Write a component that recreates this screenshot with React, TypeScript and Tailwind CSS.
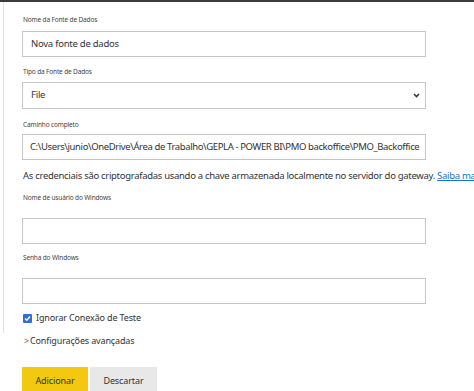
import React from "react";

const font = { fontFamily: '"Noto Sans", "Open Sans", sans-serif' };

function Label({ children, className = "" }: { children: React.ReactNode; className?: string }) {
  return (
    <div className={`h-[12px] leading-[12px] text-[6.5px] tracking-[-0.15px] text-[#444] pl-[19px] ${className}`}>{children}</div>
  );
}

export default function App() {
  return (
    <div className="w-[474px] h-[391px] overflow-hidden bg-white relative" style={font}>
      <div className="h-[2px] bg-[#3b3b3b]" />
      <div className="ml-[3px] border-l border-[#e3e3e3] pt-[12px] h-[331px]">
        <Label>Nome da Fonte de Dados</Label>
        <div className="mt-[5px] ml-[18px] w-[404px] h-[26px] border border-[#c6c6c6] flex items-center pl-[8px] text-[9.5px] tracking-[-0.25px] text-[#333]">
          Nova fonte de dados
        </div>
        <Label className="mt-[9px]">Tipo da Fonte de Dados</Label>
        <div className="mt-[4px] ml-[18px] w-[404px] h-[27px] border border-[#c6c6c6] flex items-center justify-between pl-[8px] pr-[5px] text-[9.5px] tracking-[-0.25px] text-[#333]">
          <span>File</span>
          <svg width="7" height="5" viewBox="0 0 7 5">
            <path d="M1 1 L3.5 3.6 L6 1" stroke="#333" strokeWidth="1.5" fill="none" />
          </svg>
        </div>
        <Label className="mt-[10px]">Caminho completo</Label>
        <div className="mt-[3px] ml-[18px] w-[404px] h-[26px] border border-[#c6c6c6] flex items-center pl-[7px] pr-[5px] text-[9.5px] tracking-[-0.38px] text-[#333]">
          <span className="flex-1 overflow-hidden whitespace-nowrap">
            C:\Users\junio\OneDrive\Área de Trabalho\GEPLA - POWER BI\PMO backoffice\PMO_Backoffice.xlsx
          </span>
        </div>
        <div className="mt-[8px] h-[16px] leading-[16px] pl-[19px] text-[9.5px] tracking-[-0.3px] text-[#333] whitespace-nowrap">
          As credenciais são criptografadas usando a chave armazenada localmente no servidor do gateway.{" "}
          <span className="text-[#1a73c9] underline">Saiba mais</span>
        </div>
        <Label className="mt-[8px]">Nome de usuário do Windows</Label>
        <div className="mt-[14px] ml-[18px] w-[404px] h-[26px] border border-[#c6c6c6]" />
        <Label className="mt-[8px]">Senha do Windows</Label>
        <div className="mt-[14px] ml-[18px] w-[404px] h-[26px] border border-[#c6c6c6]" />
        <div className="mt-[6px] h-[16px] flex items-center pl-[19px] text-[9px] tracking-[-0.15px] text-[#333]">
          <span className="w-[9px] h-[9px] rounded-[1px] bg-[#2d6fd6] flex items-center justify-center mr-[4px]">
            <svg width="7" height="7" viewBox="0 0 7 7">
              <path d="M1 3.6 L2.8 5.3 L6 1.5" stroke="#fff" strokeWidth="1.4" fill="none" />
            </svg>
          </span>
          Ignorar Conexão de Teste
        </div>
      </div>
      <div className="h-[16px] leading-[16px] pl-[24px] text-[9px] tracking-[-0.15px] text-[#333] flex items-center">
        <span className="text-[#666] mr-[1px]">&gt;</span>Configurações avançadas
      </div>
      <div className="mt-[18px] pl-[22px] flex gap-[2px] text-[9px] tracking-[-0.1px] text-[#333]">
        <div className="w-[66px] h-[28px] bg-[#f2c811] flex items-center justify-center">Adicionar</div>
        <div className="w-[67px] h-[28px] bg-[#e8e8e8] flex items-center justify-center">Descartar</div>
      </div>
    </div>
  );
}
